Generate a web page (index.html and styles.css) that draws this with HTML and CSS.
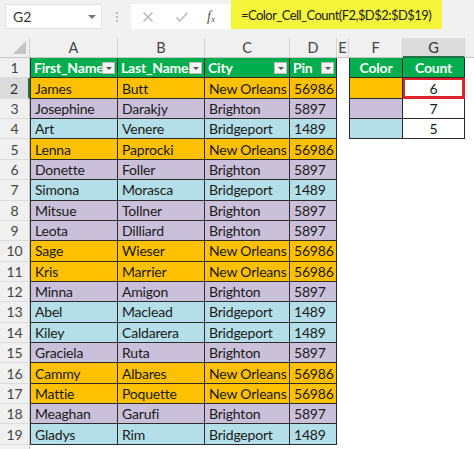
FILE: index.html
```html
<!DOCTYPE html>
<html>
<head>
<meta charset="utf-8">
<link rel="stylesheet" href="styles.css">
</head>
<body>
<div class="app">
  <div class="fbar">
    <div class="namebox"><span class="ref">G2</span><span class="nb-arrow"></span></div>
    <div class="dots"><i></i><i></i><i></i></div>
    <div class="fbtns">
      <svg class="ico" width="12" height="12" viewBox="0 0 12 12"><path d="M1.5 1.5 L10.5 10.5 M10.5 1.5 L1.5 10.5" stroke="#b4b4b4" stroke-width="1.3" fill="none"/></svg>
      <svg class="ico" width="14" height="12" viewBox="0 0 14 12"><path d="M1.5 6.5 L5 10 L12.5 1.5" stroke="#b4b4b4" stroke-width="1.3" fill="none"/></svg>
      <span class="fx">f<sub>x</sub></span>
    </div>
    <div class="formula">=Color_Cell_Count(F2,$D$2:$D$19)</div>
  </div>
  <div class="sheet">
    <div class="ch corner"><span class="tri"></span></div>
    <div class="ch">A</div><div class="ch">B</div><div class="ch">C</div><div class="ch">D</div><div class="ch">E</div><div class="ch">F</div><div class="ch sel">G</div><div class="ch last"></div>

    <div class="rh">1</div>
    <div class="c hd fa">First_Name<span class="fb"></span></div>
    <div class="c hd">Last_Name<span class="fb"></span></div>
    <div class="c hd">City<span class="fb"></span></div>
    <div class="c hd">Pin<span class="fb"></span></div>
    <div class="e"></div>
    <div class="c hd ctr fa">Color</div>
    <div class="c hd ctr">Count</div>
    <div class="e"></div>

    <div class="rh rsel">2</div>
    <div class="c o fa">James</div><div class="c o">Butt</div><div class="c o">New Orleans</div><div class="c o">56986</div>
    <div class="e"></div><div class="c o fa"></div><div class="c w ctr active">6</div><div class="e"></div>

    <div class="rh">3</div>
    <div class="c l fa">Josephine</div><div class="c l">Darakjy</div><div class="c l">Brighton</div><div class="c l">5897</div>
    <div class="e"></div><div class="c l fa"></div><div class="c w ctr">7</div><div class="e"></div>

    <div class="rh">4</div>
    <div class="c b fa">Art</div><div class="c b">Venere</div><div class="c b">Bridgeport</div><div class="c b">1489</div>
    <div class="e"></div><div class="c b fa"></div><div class="c w ctr">5</div><div class="e"></div>

    <div class="rh">5</div>
    <div class="c o fa">Lenna</div><div class="c o">Paprocki</div><div class="c o">New Orleans</div><div class="c o">56986</div>
    <div class="e"></div><div class="e"></div><div class="e"></div><div class="e"></div>

    <div class="rh">6</div>
    <div class="c l fa">Donette</div><div class="c l">Foller</div><div class="c l">Brighton</div><div class="c l">5897</div>
    <div class="e"></div><div class="e"></div><div class="e"></div><div class="e"></div>

    <div class="rh">7</div>
    <div class="c b fa">Simona</div><div class="c b">Morasca</div><div class="c b">Bridgeport</div><div class="c b">1489</div>
    <div class="e"></div><div class="e"></div><div class="e"></div><div class="e"></div>

    <div class="rh">8</div>
    <div class="c l fa">Mitsue</div><div class="c l">Tollner</div><div class="c l">Brighton</div><div class="c l">5897</div>
    <div class="e"></div><div class="e"></div><div class="e"></div><div class="e"></div>

    <div class="rh">9</div>
    <div class="c l fa">Leota</div><div class="c l">Dilliard</div><div class="c l">Brighton</div><div class="c l">5897</div>
    <div class="e"></div><div class="e"></div><div class="e"></div><div class="e"></div>

    <div class="rh">10</div>
    <div class="c o fa">Sage</div><div class="c o">Wieser</div><div class="c o">New Orleans</div><div class="c o">56986</div>
    <div class="e"></div><div class="e"></div><div class="e"></div><div class="e"></div>

    <div class="rh">11</div>
    <div class="c o fa">Kris</div><div class="c o">Marrier</div><div class="c o">New Orleans</div><div class="c o">56986</div>
    <div class="e"></div><div class="e"></div><div class="e"></div><div class="e"></div>

    <div class="rh">12</div>
    <div class="c l fa">Minna</div><div class="c l">Amigon</div><div class="c l">Brighton</div><div class="c l">5897</div>
    <div class="e"></div><div class="e"></div><div class="e"></div><div class="e"></div>

    <div class="rh">13</div>
    <div class="c b fa">Abel</div><div class="c b">Maclead</div><div class="c b">Bridgeport</div><div class="c b">1489</div>
    <div class="e"></div><div class="e"></div><div class="e"></div><div class="e"></div>

    <div class="rh">14</div>
    <div class="c b fa">Kiley</div><div class="c b">Caldarera</div><div class="c b">Bridgeport</div><div class="c b">1489</div>
    <div class="e"></div><div class="e"></div><div class="e"></div><div class="e"></div>

    <div class="rh">15</div>
    <div class="c l fa">Graciela</div><div class="c l">Ruta</div><div class="c l">Brighton</div><div class="c l">5897</div>
    <div class="e"></div><div class="e"></div><div class="e"></div><div class="e"></div>

    <div class="rh">16</div>
    <div class="c o fa">Cammy</div><div class="c o">Albares</div><div class="c o">New Orleans</div><div class="c o">56986</div>
    <div class="e"></div><div class="e"></div><div class="e"></div><div class="e"></div>

    <div class="rh">17</div>
    <div class="c o fa">Mattie</div><div class="c o">Poquette</div><div class="c o">New Orleans</div><div class="c o">56986</div>
    <div class="e"></div><div class="e"></div><div class="e"></div><div class="e"></div>

    <div class="rh">18</div>
    <div class="c l fa">Meaghan</div><div class="c l">Garufi</div><div class="c l">Brighton</div><div class="c l">5897</div>
    <div class="e"></div><div class="e"></div><div class="e"></div><div class="e"></div>

    <div class="rh">19</div>
    <div class="c b fa">Gladys</div><div class="c b">Rim</div><div class="c b">Bridgeport</div><div class="c b">1489</div>
    <div class="e"></div><div class="e"></div><div class="e"></div><div class="e"></div>

    <div class="rh rlast"></div>
  </div>
</div>
</body>
</html>
```
FILE: styles.css
```css
* { box-sizing: border-box; }
html, body { margin: 0; padding: 0; background: #fff; }
body { width: 474px; height: 449px; overflow: hidden; font-family: Lato, "Liberation Sans", sans-serif; color: #1a1a1a; }

.fbar { height: 38px; background: #f1f1f1; display: flex; align-items: flex-start; padding-top: 4px; position: relative; }
.namebox { margin-left: 5px; width: 97px; height: 25px; background: #fff; border: 1px solid #e2e2e2; display: flex; align-items: center; justify-content: space-between; padding: 0 5px 0 7px; }
.ref { font-size: 14px; color: #333; }
.nb-arrow { width: 0; height: 0; border-left: 4px solid transparent; border-right: 4px solid transparent; border-top: 4px solid #777; }
.dots { width: 29px; height: 25px; display: flex; flex-direction: column; align-items: center; justify-content: center; gap: 2px; }
.dots i { display: block; width: 2px; height: 2px; background: #b8b8b8; }
.fbtns { width: 100px; height: 25px; background: #fff; display: flex; align-items: center; padding-left: 11px; gap: 0; }
.fbtns .ico:first-child { margin-right: 21px; }
.fbtns .ico:nth-child(2) { margin-right: 18px; }
.fx { font-family: "Liberation Serif", serif; font-style: italic; font-size: 14px; color: #555; }
.fx sub { font-size: 9px; vertical-align: -1px; }
.formula { margin-top: -4px; width: 211px; height: 29px; background: #f5f53c; font-size: 13px; color: #222; display: flex; align-items: center; padding-left: 10px; letter-spacing: -0.55px; white-space: nowrap; overflow: hidden; }

.sheet { display: grid; grid-template-columns: 30px 88px 87px 85px 47px 12px 54px 62px 9px; grid-template-rows: 20px repeat(19, 20.37px) 4px; font-size: 14px; letter-spacing: -0.2px; }
.ch { background: #f0f0f0; border-right: 1px solid #d4d4d4; border-bottom: 1px solid #c6c6c6; display: flex; align-items: center; justify-content: center; color: #444; font-size: 14.5px; letter-spacing: 0; }
.ch.sel { background: #dcdcdc; color: #333; border-bottom: 2px solid #217346; }
.ch.last { border-right: none; }
.corner { position: relative; }
.tri { position: absolute; right: 3px; bottom: 3px; width: 0; height: 0; border-left: 13px solid transparent; border-bottom: 13px solid #c4c4c4; }
.rh { background: #f0f0f0; border-right: 1px solid #c6c6c6; border-bottom: 1px solid #dcdcdc; display: flex; align-items: center; justify-content: center; color: #444; font-size: 14px; letter-spacing: 0; grid-column: 1; }
.rh.rsel { background: #dcdcdc; border-right: 2px solid #217346; color: #333; }
.rh.rlast { border-bottom: none; }

.c { border-right: 1px solid #2b2b2b; border-bottom: 1px solid #2b2b2b; display: flex; align-items: center; padding-left: 4px; white-space: nowrap; overflow: hidden; position: relative; }
.c.fa { border-left: 1px solid #2b2b2b; }
.c.hd { background: #00ae4d; color: #fff; font-weight: bold; padding-left: 3px; }
.c.ctr { justify-content: center; padding-left: 0; }
.c.o { background: #ffc000; }
.c.l { background: #cbc0da; }
.c.b { background: #b4dfe8; }
.c.w { background: #fff; }
.c.active { box-shadow: inset 0 0 0 2px #e0242b; border-color: #e0242b; }
.e { background: #fff; }

.fb { position: absolute; right: 2px; top: 4px; width: 13px; height: 12px; background: #f4f4f4; border: 1px solid #bdbdbd; }
.fb::after { content: ""; position: absolute; left: 3px; top: 4px; border-left: 3px solid transparent; border-right: 3px solid transparent; border-top: 3px solid #555; }
```
